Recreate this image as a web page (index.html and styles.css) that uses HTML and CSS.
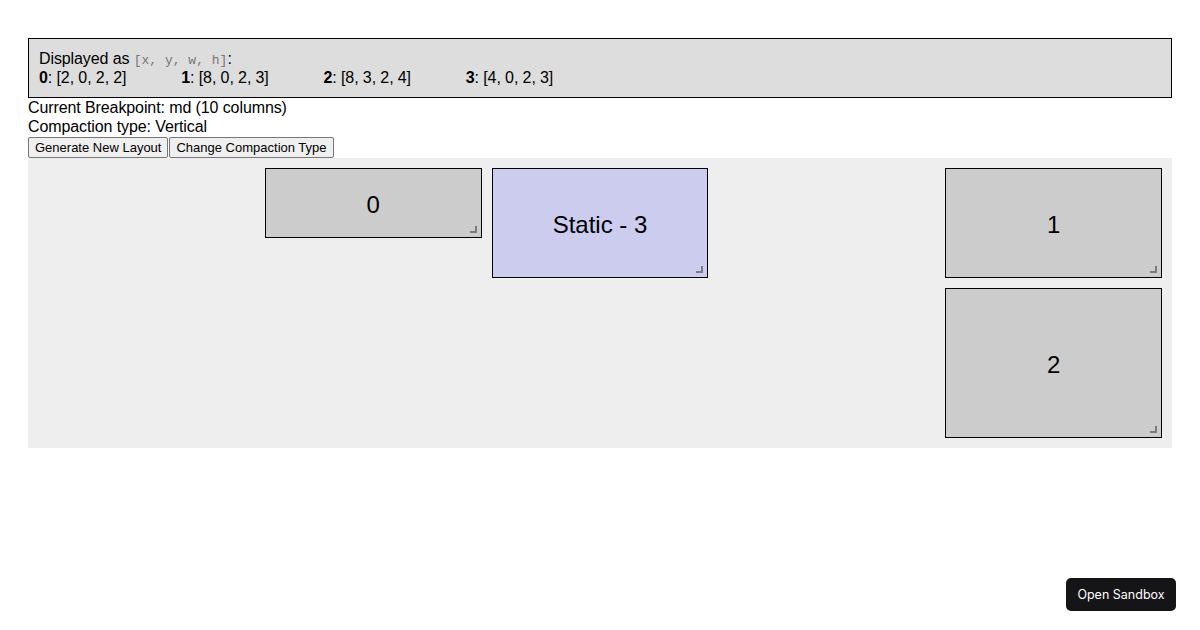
FILE: index.html
```html
<!DOCTYPE html>
<html lang="en">
<head>
  <meta charset="UTF-8" />
  <meta name="viewport" content="width=device-width, initial-scale=1" />
  <title>Static Elements</title>
  <link rel="stylesheet" href="styles.css">
</head>
<body>

  <!-- Current layout -->
  <div class="layout-json">
    <div>Displayed as <code>[x, y, w, h]</code>:</div>
    <div class="columns">
      <div class="layout-item"><b>0</b>: [2, 0, 2, 2]</div>
      <div class="layout-item"><b>1</b>: [8, 0, 2, 3]</div>
      <div class="layout-item"><b>2</b>: [8, 3, 2, 4]</div>
      <div class="layout-item"><b>3</b>: [4, 0, 2, 3]</div>
    </div>
  </div>

  <div>Current Breakpoint: md (10 columns)</div>
  <div>Compaction type: Vertical</div>
  <div class="actions"><button>Generate New Layout</button><button>Change Compaction Type</button></div>

  <!-- Grid -->
  <div class="grid-layout">
    <div class="grid-item item-0"><span class="text">0</span></div>
    <div class="grid-item item-1"><span class="text">1</span></div>
    <div class="grid-item item-2"><span class="text">2</span></div>
    <div class="grid-item item-3 static"><span class="text">Static - 3</span></div>
  </div>

  <button class="sandbox-btn">Open Sandbox</button>

</body>
</html>
```

FILE: styles.css
```css
body {
  font-family: "Liberation Sans", Arial, sans-serif;
  font-size: 16px;
  line-height: 19px;
  letter-spacing: -0.1px;
  margin: 0;
  padding: 0 28px 28px;
  color: #000;
  background: #fff;
}

.layout-json {
  background: #ddd;
  border: 1px solid #000;
  margin-top: 38px;
  padding: 10px;
}

.layout-json code {
  font-family: "Liberation Mono", "Courier New", monospace;
  font-size: 13px;
  line-height: 1;
  letter-spacing: 0;
  color: #777;
}

.columns {
  columns: 120px;
}

.actions {
  display: flex;
  padding-top: 1px;
}

.actions button {
  font-family: "Liberation Sans", Arial, sans-serif;
  font-size: 13px;
  letter-spacing: 0;
  padding: 1px 6px;
  background: #efefef;
  border: 1px solid #767676;
  border-radius: 2px;
  color: #000;
  height: 21px;
  margin-right: 1px;
}

.grid-layout {
  display: grid;
  grid-template-columns: repeat(10, 1fr);
  grid-template-rows: repeat(7, 30px);
  gap: 10px;
  padding: 10px;
  background: #eee;
}

.grid-item {
  position: relative;
  background: #ccc;
  border: 1px solid #000;
  display: flex;
  align-items: center;
  justify-content: center;
}

.grid-item.static {
  background: #cce;
}

.grid-item::after {
  content: "";
  position: absolute;
  right: 4px;
  bottom: 4px;
  width: 5px;
  height: 5px;
  border-right: 2px solid rgba(0, 0, 0, 0.4);
  border-bottom: 2px solid rgba(0, 0, 0, 0.4);
}

.grid-item .text {
  font-size: 24px;
  line-height: 28px;
  padding-top: 4px;
  letter-spacing: 0;
}

.item-0 { grid-column: 3 / 5; grid-row: 1 / 3; }
.item-1 { grid-column: 9 / 11; grid-row: 1 / 4; }
.item-2 { grid-column: 9 / 11; grid-row: 4 / 8; }
.item-3 { grid-column: 5 / 7; grid-row: 1 / 4; }

.sandbox-btn {
  position: fixed;
  right: 24px;
  bottom: 19px;
  width: 110px;
  height: 33px;
  background: #151518;
  color: #fff;
  border: none;
  border-radius: 5px;
  font-family: Inter, "Liberation Sans", sans-serif;
  font-size: 12.5px;
  letter-spacing: 0;
}
```
